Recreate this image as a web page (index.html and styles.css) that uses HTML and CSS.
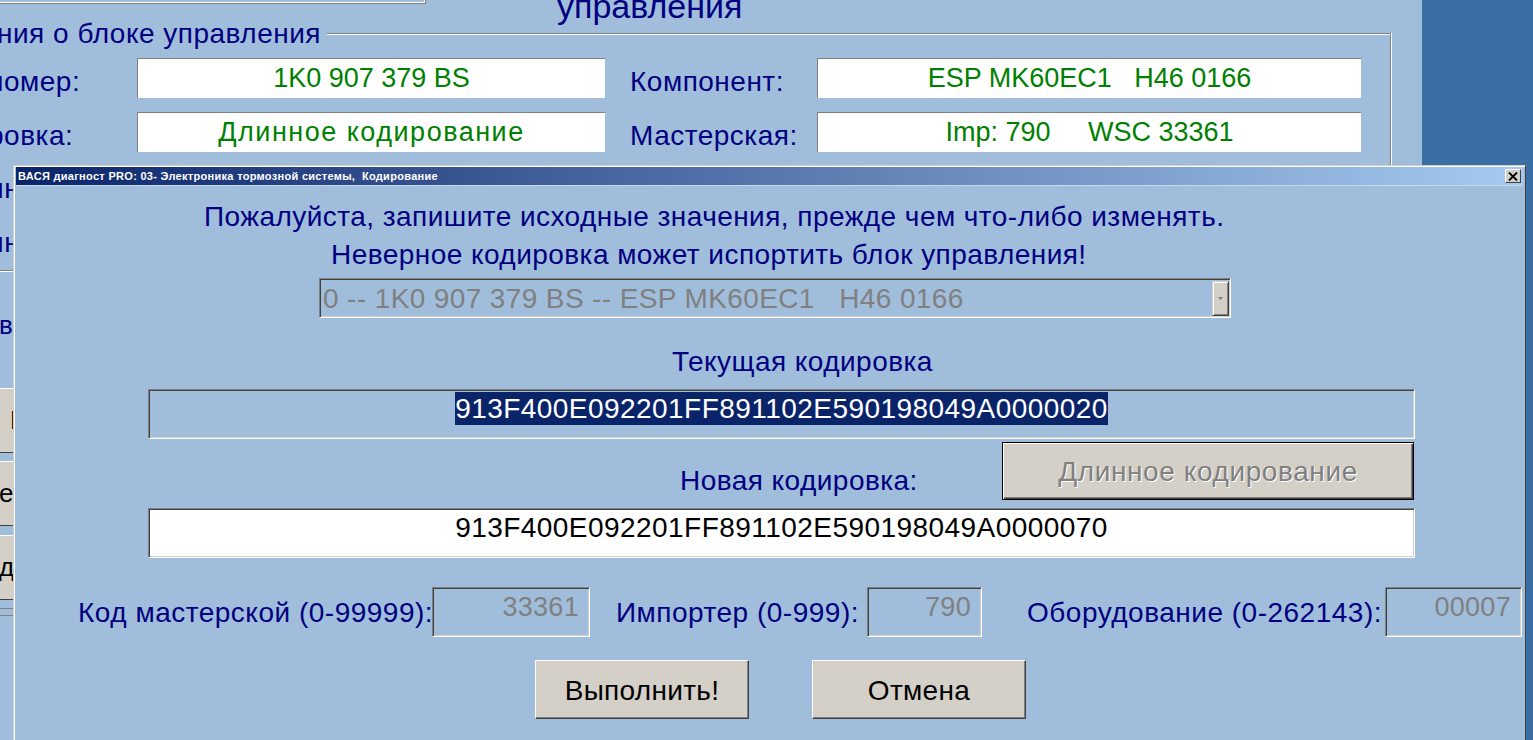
FILE: index.html
```html
<!DOCTYPE html>
<html lang="ru">
<head>
<meta charset="utf-8">
<title>ВАСЯ диагност PRO</title>
<link rel="stylesheet" href="styles.css">
</head>
<body>
<div class="screen">
  <div class="app">
    <div class="top-row">
      <div class="topbox"></div>
      <div class="heading">управления</div>
    </div>
    <div class="group">
      <div class="legend">ния о блоке управления</div>
      <div class="info-row r1">
        <span class="lbl lbl-l">номер:</span>
        <span class="fld fld-l">1K0 907 379 BS</span>
        <span class="lbl lbl-r">Компонент:</span>
        <span class="fld fld-r">ESP MK60EC1   H46 0166</span>
      </div>
      <div class="info-row r2">
        <span class="lbl lbl-l">ровка:</span>
        <span class="fld fld-l wide">Длинное кодирование</span>
        <span class="lbl lbl-r">Мастерская:</span>
        <span class="fld fld-r">Imp: 790     WSC 33361</span>
      </div>
      <div class="info-row r3">
        <span class="lbl lbl-l">ин</span>
        <span class="fld fld-l"></span>
      </div>
      <div class="info-row r4">
        <span class="lbl lbl-l">ин</span>
        <span class="fld fld-l"></span>
      </div>
    </div>
    <div class="stubs">
      <div class="stub-lbl">в</div>
      <div class="stub-btn b1">Н</div>
      <div class="stub-btn b2">е</div>
      <div class="stub-btn b3">д</div>
      <div class="stub-sep"></div>
    </div>
  </div>
  <div class="desktop"></div>

  <div class="dialog">
    <div class="titlebar">
      <span class="title">ВАСЯ диагност PRO: 03- Электроника тормозной системы,&nbsp; Кодирование</span>
      <span class="close"><svg width="10" height="9" viewBox="0 0 10 9"><path d="M1 0.5 L9 8.5 M9 0.5 L1 8.5" stroke="#000" stroke-width="1.8"/></svg></span>
    </div>
    <div class="row a">Пожалуйста, запишите исходные значения, прежде чем что-либо изменять.</div>
    <div class="row b">Неверное кодировка может испортить блок управления!</div>
    <div class="row c">
      <div class="combo sunken">
        <span class="combo-text">0 -- 1K0 907 379 BS -- ESP MK60EC1   H46 0166</span>
        <span class="combo-btn"><svg width="5" height="3" viewBox="0 0 5 3"><path d="M0 0 H5 L2.5 3 Z" fill="#808080"/></svg></span>
      </div>
    </div>
    <div class="row d">Текущая кодировка</div>
    <div class="row e">
      <div class="code sunken cur"><span class="sel">913F400E092201FF891102E590198049A0000020</span></div>
    </div>
    <div class="row f">
      <div class="new-lbl-box"><span class="new-lbl">Новая кодировка:</span></div>
      <div class="long-btn">Длинное кодирование</div>
    </div>
    <div class="row g">
      <div class="code sunken newc"><span class="val">913F400E092201FF891102E590198049A0000070</span></div>
    </div>
    <div class="row h">
      <span class="blbl bl1">Код мастерской (0-99999):</span>
      <span class="num sunken n1">33361</span>
      <span class="blbl bl2">Импортер (0-999):</span>
      <span class="num sunken n2">790</span>
      <span class="blbl bl3">Оборудование (0-262143):</span>
      <span class="num sunken n3">00007</span>
    </div>
    <div class="row i">
      <div class="btn">Выполнить!</div>
      <div class="btn">Отмена</div>
    </div>
  </div>
</div>
</body>
</html>
```

FILE: styles.css
```css
html, body {
  margin: 0;
  padding: 0;
}
body {
  width: 1533px;
  height: 740px;
  overflow: hidden;
  background: #3a6ea5;
  font-family: "Liberation Sans", Arial, sans-serif;
}
.screen {
  position: relative;
  width: 1533px;
  height: 740px;
  display: flex;
}
.app {
  width: 1422px;
  height: 740px;
  background: #a0bedb;
  overflow: hidden;
  flex: none;
}
.desktop {
  flex: 1;
  background: #3a6ea5;
}

/* background window */
.top-row {
  display: flex;
  height: 33px;
}
.topbox {
  width: 425px;
  height: 3px;
  border-bottom: 1px solid #808080;
  border-right: 1px solid #808080;
  box-shadow: inset -1px -1px 0 #fff;
  flex: none;
}
.heading {
  margin-left: 131px;
  margin-top: -14px;
  height: 40px;
  font-size: 34px;
  line-height: 40px;
  color: #000080;
}
.group {
  margin-left: -20px;
  width: 1410px;
  height: 236px;
  border-top: 1px solid #808080;
  border-right: 1px solid #808080;
  border-bottom: 1px solid #808080;
  box-shadow: inset 0 1px 0 #fff, 1px 0 0 #fff, 0 1px 0 #fff;
}
.legend {
  width: fit-content;
  margin-top: -15px;
  margin-left: 17px;
  padding-right: 6px;
  background: #a0bedb;
  font-size: 28px;
  letter-spacing: 0.5px;
  line-height: 29px;
  color: #000080;
}
.info-row {
  display: flex;
  align-items: center;
  height: 41px;
  padding-left: 8px;
}
.r1 { margin-top: 9px; }
.r2 { margin-top: 13px; }
.r3 { margin-top: 12px; }
.r4 { margin-top: 13px; }
.lbl {
  font-size: 28px;
  letter-spacing: 0.5px;
  color: #000080;
  padding-top: 8px;
  flex: none;
}
.lbl-l { width: 149px; }
.lbl-r { width: 187px; margin-left: 25px; }
.fld {
  height: 40px;
  box-sizing: border-box;
  background: #fff;
  border-top: 1px solid #808080;
  border-left: 1px solid #808080;
  color: #008000;
  font-size: 27px;
  line-height: 38px;
  text-align: center;
  white-space: pre;
  flex: none;
}
.fld.wide { letter-spacing: 1.5px; }
.fld-l { width: 468px; }
.fld-r { width: 544px; }

.stubs {
  width: 13px;
}
.stub-lbl {
  margin-top: 40px;
  margin-left: -1px;
  font-size: 26px;
  line-height: 28px;
  color: #000080;
}
.stub-btn {
  margin-left: -86px;
  width: 99px;
  height: 65px;
  box-sizing: border-box;
  background: #d4d0c8;
  border-bottom: 1px solid #404040;
  border-top: 1px solid #fff;
  font-size: 26px;
  line-height: 63px;
  color: #000;
}
.b1 { margin-top: 49px; padding-left: 96px; }
.b2 { margin-top: 8px; padding-left: 85px; }
.b3 { margin-top: 9px; padding-left: 85px; }
.stub-sep {
  margin-top: 8px;
  height: 6px;
  border-top: 1px solid #808080;
  border-bottom: 1px solid #808080;
}

/* dialog */
.dialog {
  position: absolute;
  left: 13px;
  top: 165px;
  width: 1511px;
  height: 580px;
  background: #a0bedb;
  border-top: 1px solid #d4d0c8;
  border-left: 1px solid #d4d0c8;
  border-right: 1px solid #404040;
  box-shadow: inset 1px 1px 0 #fff;
}
.titlebar {
  margin: 1px 2px 0 2px;
  height: 18px;
  background: linear-gradient(to right, #0a246a, #a6caf0);
  display: flex;
  align-items: center;
  justify-content: space-between;
  padding: 0 2px 0 2px;
  border-bottom: 1px solid #c8d8e8;
}
.title {
  color: #fff;
  font-weight: bold;
  font-size: 11px;
  letter-spacing: 0.3px;
  white-space: nowrap;
}
.close {
  width: 16px;
  height: 14px;
  box-sizing: border-box;
  background: #d4d0c8;
  border-top: 1px solid #fff;
  border-left: 1px solid #fff;
  border-right: 1px solid #404040;
  border-bottom: 1px solid #404040;
  display: flex;
  align-items: center;
  justify-content: center;
}
.row {
  display: flex;
  color: #000080;
  font-size: 28px;
  letter-spacing: 0.45px;
  line-height: 33px;
  white-space: pre;
}
.a { margin-top: 14px; margin-left: 190px; height: 30px; }
.b { margin-top: 8px; margin-left: 317px; height: 30px; }
.c { margin-top: 10px; margin-left: 305px; height: 40px; }
.d { margin-top: 27px; margin-left: 658px; height: 30px; }
.e { margin-top: 14px; margin-left: 134px; height: 50px; }
.f { margin-top: 3px; height: 58px; line-height: 30px; }
.g { margin-top: 8px; margin-left: 134px; height: 50px; }
.h { margin-top: 29px; margin-left: 64px; height: 50px; align-items: center; letter-spacing: 0.5px; line-height: 30px; }
.i { margin-top: 23px; margin-left: 521px; height: 59px; gap: 63px; letter-spacing: 0.3px; line-height: 30px; }

.sunken {
  box-sizing: border-box;
  border-top: 1px solid #808080;
  border-left: 1px solid #808080;
  border-bottom: 1px solid #fff;
  border-right: 1px solid #fff;
  box-shadow: inset 1px 1px 0 #404040, inset -1px -1px 0 #d4d0c8;
}
.combo {
  width: 912px;
  height: 40px;
  display: flex;
  align-items: center;
  justify-content: space-between;
  padding: 0 1px 0 3px;
}
.combo-text {
  color: #808080;
  font-size: 28px;
  letter-spacing: 0.38px;
  line-height: 36px;
  padding-top: 2px;
}
.combo-btn {
  width: 17px;
  height: 35px;
  box-sizing: border-box;
  background: #d4d0c8;
  border-top: 1px solid #d4d0c8;
  border-left: 1px solid #d4d0c8;
  border-right: 1px solid #404040;
  border-bottom: 1px solid #404040;
  box-shadow: inset 1px 1px 0 #fff, inset -1px -1px 0 #808080;
  display: flex;
  align-items: center;
  justify-content: center;
}
.code {
  width: 1267px;
  height: 50px;
  display: flex;
  align-items: flex-start;
  justify-content: center;
  padding-top: 2px;
  font-size: 28px;
  letter-spacing: 0.45px;
  line-height: 34px;
}
.newc {
  background: #fff;
}
.sel {
  height: 33px;
  background: #0a246a;
  color: #fff;
}
.val {
  height: 33px;
  color: #000;
}
.new-lbl-box {
  width: 988px;
  padding-left: 666px;
  box-sizing: border-box;
  display: flex;
  align-items: flex-end;
  padding-bottom: 4px;
}
.long-btn {
  width: 412px;
  height: 58px;
  box-sizing: border-box;
  background: #d4d0c8;
  border: 1px solid #000;
  box-shadow: inset 1px 1px 0 #fff, inset -1px -1px 0 #404040, inset -2px -2px 0 #808080;
  color: #808080;
  text-shadow: 1px 1px 0 #fff;
  display: flex;
  align-items: center;
  justify-content: center;
  letter-spacing: 0.6px;
  padding-top: 2px;
}
.blbl {
  flex: none;
  text-align: right;
  box-sizing: border-box;
  padding-top: 2px;
}
.bl1 { width: 354px; }
.bl2 { width: 277px; padding-right: 8px; }
.bl3 { width: 403px; padding-right: 3px; }
.num {
  flex: none;
  height: 50px;
  text-align: right;
  color: #808080;
  padding-right: 10px;
  padding-top: 4px;
  font-size: 27px;
  letter-spacing: 0.3px;
  line-height: 30px;
}
.n1 { width: 158px; }
.n2 { width: 115px; }
.n3 { width: 137px; }
.btn {
  width: 214px;
  height: 59px;
  box-sizing: border-box;
  background: #d4d0c8;
  border-top: 1px solid #fff;
  border-left: 1px solid #fff;
  border-right: 1px solid #404040;
  border-bottom: 1px solid #404040;
  box-shadow: inset -1px -1px 0 #808080;
  color: #000;
  display: flex;
  align-items: center;
  justify-content: center;
  padding-top: 2px;
}
```
